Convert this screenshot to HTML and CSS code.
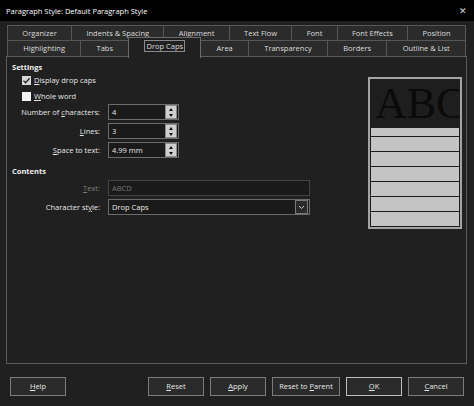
FILE: index.html
```html
<!DOCTYPE html>
<html lang="en">
<head>
  <meta charset="UTF-8" />
  <title>Paragraph Style: Default Paragraph Style</title>
  <link rel="stylesheet" href="styles.css">
</head>
<body>
  <div class="titlebar">
    <span class="title">Paragraph Style: Default Paragraph Style</span>
    <span class="close">&#x2715;</span>
  </div>

  <div class="tabs">
    <div class="tab-row">
      <div class="tab">Organizer</div>
      <div class="tab">Indents &amp; Spacing</div>
      <div class="tab">Alignment</div>
      <div class="tab">Text Flow</div>
      <div class="tab">Font</div>
      <div class="tab">Font Effects</div>
      <div class="tab">Position</div>
    </div>
    <div class="tab-row front">
      <div class="tab">Highlighting</div>
      <div class="tab">Tabs</div>
      <div class="tab selected"><span class="focus">Drop Caps</span></div>
      <div class="tab">Area</div>
      <div class="tab">Transparency</div>
      <div class="tab">Borders</div>
      <div class="tab">Outline &amp; List</div>
    </div>
  </div>

  <div class="panel">
    <div class="options">
      <h3>Settings</h3>
      <div class="check"><span class="box checked">
        <svg width="9" height="9" viewBox="0 0 9 9"><path d="M1.5 4.6 L3.6 6.7 L7.6 2.2" fill="none" stroke="#222" stroke-width="1.3"/></svg>
      </span><u>D</u>isplay drop caps</div>
      <div class="check"><span class="box"></span><u>W</u>hole word</div>

      <div class="fields">
        <label>Number of <u>c</u>haracters:</label>
        <div class="spin"><span class="value">4</span><span class="spin-btn"><i class="up"></i><i class="down"></i></span></div>
        <label><u>L</u>ines:</label>
        <div class="spin"><span class="value">3</span><span class="spin-btn"><i class="up"></i><i class="down"></i></span></div>
        <label><u>S</u>pace to text:</label>
        <div class="spin"><span class="value">4.99 mm</span><span class="spin-btn"><i class="up"></i><i class="down"></i></span></div>
      </div>

      <h3 class="contents">Contents</h3>
      <div class="fields wide">
        <label class="disabled"><u>T</u>ext:</label>
        <div class="entry disabled">ABCD</div>
        <label>Character st<u>y</u>le:</label>
        <div class="select"><span class="value">Drop Caps</span>
          <span class="drop-btn"><svg width="7" height="5" viewBox="0 0 7 5"><path d="M1 1 L3.5 3.5 L6 1" fill="none" stroke="#ccc" stroke-width="1"/></svg></span>
        </div>
      </div>
    </div>

    <div class="preview">
      <div class="preview-cap">ABC</div>
      <div class="preview-line first"></div>
      <div class="preview-line"></div>
      <div class="preview-line"></div>
      <div class="preview-line"></div>
      <div class="preview-line"></div>
      <div class="preview-line"></div>
      <div class="preview-line"></div>
    </div>
  </div>

  <div class="buttons">
    <div class="btn help"><u>H</u>elp</div>
    <div class="btn"><u>R</u>eset</div>
    <div class="btn"><u>A</u>pply</div>
    <div class="btn parent">Reset to <u>P</u>arent</div>
    <div class="btn default"><u>O</u>K</div>
    <div class="btn"><u>C</u>ancel</div>
  </div>
</body>
</html>
```

FILE: styles.css
```css
body {
  margin: 0;
  width: 474px;
  height: 406px;
  overflow: hidden;
  background-color: #202020;
  color: #e6e6e6;
  font-family: "Open Sans", "Noto Sans", sans-serif;
  font-size: 7.5px;
}
u {
  text-decoration-thickness: 1px;
  text-underline-offset: 1px;
}

.titlebar {
  height: 21px;
  background-color: #000;
  color: #fff;
  display: flex;
  align-items: center;
  justify-content: space-between;
  padding: 0 7px 0 6px;
}
.close {
  font-size: 9px;
  color: #ddd;
}

.tabs {
  padding: 4px 8px 0 7px;
}
.tab-row {
  display: flex;
  height: 15px;
}
.tab-row.front {
  height: 16px;
}
.tab {
  flex: 1 1 auto;
  border: 1px solid #575757;
  border-bottom: none;
  margin-right: -1px;
  background-color: #2b2b2b;
  color: #dcdcdc;
  text-align: center;
  line-height: 14px;
  white-space: nowrap;
}
.tab:last-child {
  margin-right: 0;
}
.tab.selected {
  margin-top: -3px;
  height: 20px;
  background-color: #202020;
  border-color: #6a6a6a;
  position: relative;
  z-index: 1;
  line-height: 16px;
}
.focus {
  border: 1px solid #8a8a8a;
  padding: 0 1px;
}

.panel {
  margin: 0 7px 0 6px;
  height: 306px;
  border: 1px solid #5c5c5c;
  display: flex;
  justify-content: space-between;
}
.options {
  padding: 5px 5px;
}
.options h3 {
  margin: 0;
  font-size: 7.5px;
  font-weight: bold;
  line-height: 10px;
  color: #f0f0f0;
}
.options h3.contents {
  margin-top: 8px;
}
.check {
  display: flex;
  align-items: center;
  height: 16px;
  margin-left: 10px;
}
.box {
  width: 9px;
  height: 9px;
  background-color: #f4f4f4;
  margin-right: 3px;
  display: flex;
}
.box.checked {
  background-color: #d8d8d8;
}

.fields {
  display: grid;
  grid-template-columns: 88px 71px;
  column-gap: 8px;
  row-gap: 3px;
  align-items: center;
}
.fields.wide {
  grid-template-columns: 88px 202px;
  margin-top: 4px;
}
.fields label {
  text-align: right;
  white-space: nowrap;
}
.fields label.disabled {
  color: #7a7a7a;
}
.spin,
.select,
.entry {
  height: 16px;
  box-sizing: border-box;
  border: 1px solid #6c6c6c;
  background-color: #1a1a1a;
  display: flex;
  align-items: center;
}
.value {
  flex: 1;
  padding-left: 3px;
}
.entry {
  padding-left: 3px;
}
.entry.disabled {
  border-color: #444;
  color: #777;
}
.spin-btn {
  width: 10px;
  height: 12px;
  margin-right: 1px;
  background-color: #cfcfcf;
  display: flex;
  flex-direction: column;
  justify-content: space-around;
  align-items: center;
  border: 1px solid #8a8a8a;
}
.spin-btn i {
  width: 0;
  height: 0;
  border-left: 2.5px solid transparent;
  border-right: 2.5px solid transparent;
}
.spin-btn .up {
  border-bottom: 3px solid #111;
}
.spin-btn .down {
  border-top: 3px solid #111;
}
.drop-btn {
  width: 11px;
  height: 12px;
  margin-right: 1px;
  border: 1px solid #7a7a7a;
  background-color: #2a2a2a;
  display: flex;
  align-items: center;
  justify-content: center;
}

.preview {
  width: 94px;
  height: 152px;
  box-sizing: border-box;
  margin: 20px 4px 0 0;
  border: 2px solid #a4a4a4;
  padding: 0 1px;
  background-color: #1e1e1e;
  overflow: hidden;
}
.preview-cap {
  height: 49px;
  font-family: "Liberation Serif", serif;
  font-size: 44px;
  line-height: 49px;
  color: #0a0a0a;
  padding-left: 4px;
  white-space: nowrap;
  overflow: hidden;
}
.preview-line {
  height: 14px;
  background-color: #c4c4c4;
  border-bottom: 1px solid #1c1c1c;
}
.preview-line.first {
  height: 8px;
}

.buttons {
  display: flex;
  gap: 6px;
  padding: 13px 10px 0;
}
.btn {
  width: 56px;
  height: 19px;
  box-sizing: border-box;
  border: 1px solid #7c7c7c;
  background-color: #2a2a2a;
  text-align: center;
  line-height: 17px;
}
.btn.help {
  margin-right: auto;
}
.btn.parent {
  width: 68px;
}
.btn.default {
  border-color: #bdbdbd;
}
```
